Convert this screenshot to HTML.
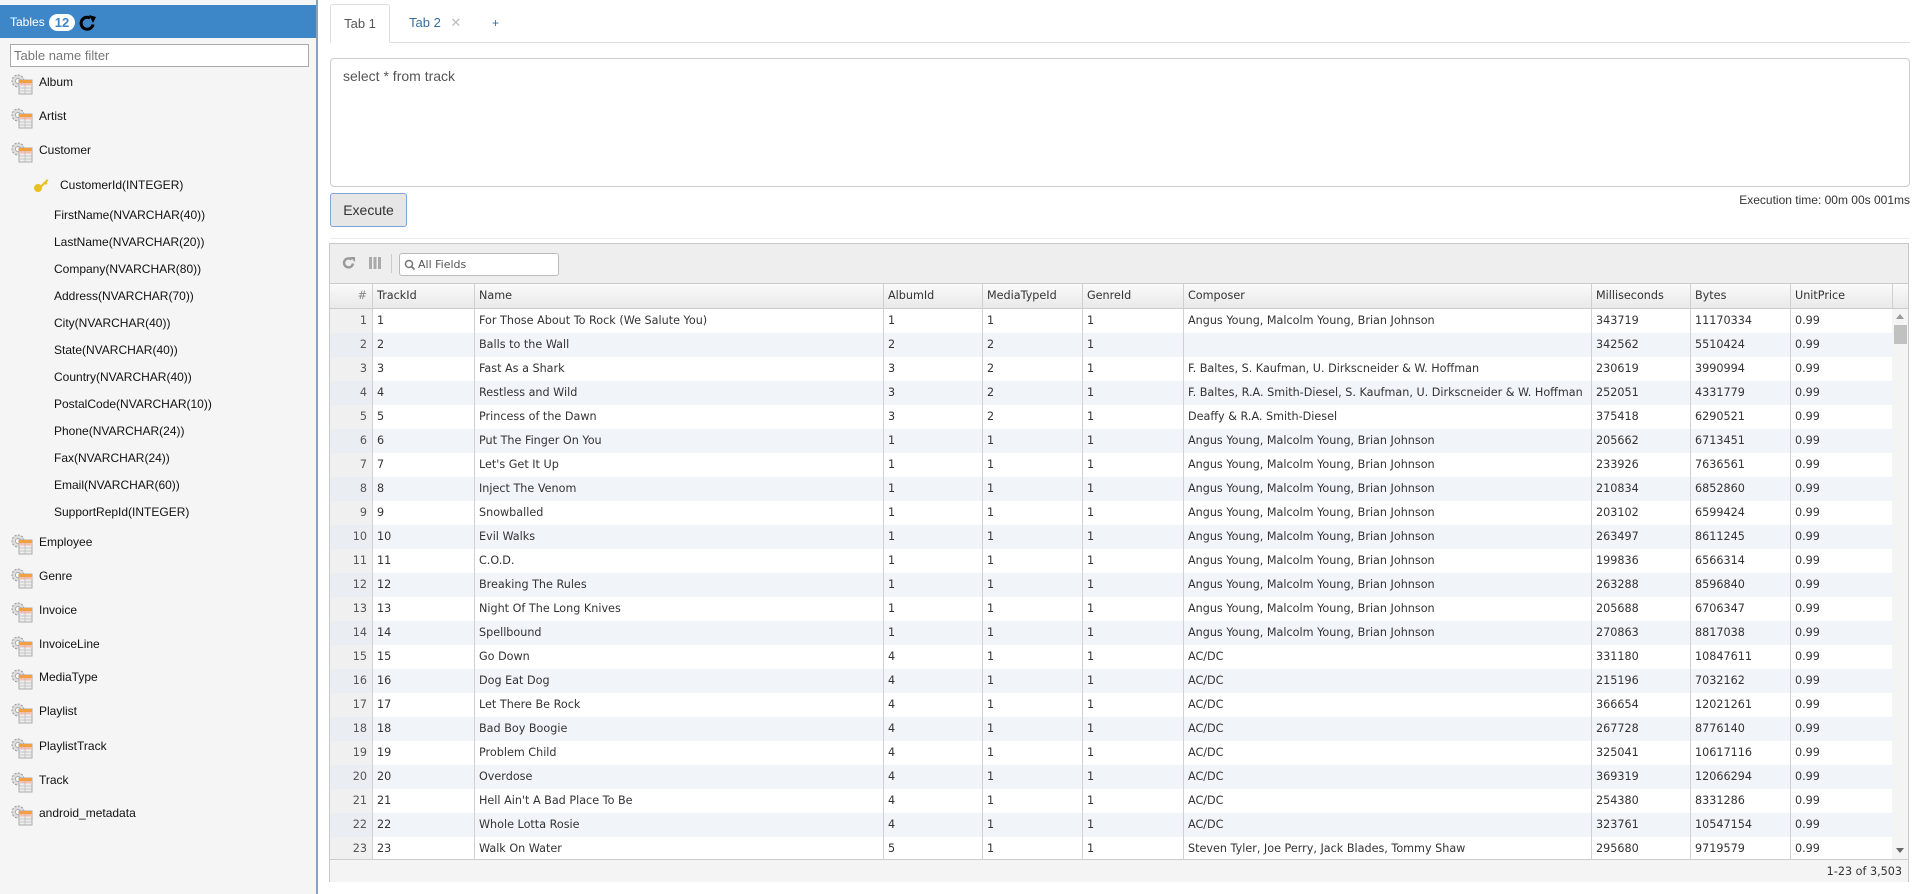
<!DOCTYPE html>
<html><head><meta charset="utf-8">
<style>
*{box-sizing:border-box;margin:0;padding:0}
body{width:1920px;height:894px;overflow:hidden;background:#fff;font-family:"Liberation Sans",Arial,sans-serif;position:relative}
#side{position:absolute;left:0;top:0;width:318px;height:894px;background:#f5f5f5;border-right:2px solid #8aa3bd}
#hdr{position:absolute;left:0;top:5px;width:316px;height:33px;background:#3d87c9;color:#fff;font-size:12px}
#hdr .t{position:absolute;left:10px;top:10px}
#hdr .b{position:absolute;left:49px;top:9px;width:26px;height:17px;border-radius:9px;background:#fff;color:#3d87c9;font-weight:bold;text-align:center;line-height:17px;font-size:13px}
#flt{position:absolute;left:10px;top:44px;width:299px;height:23px;border:1px solid #aaa;background:#fff;font-size:13px;color:#777;padding:3px 3px;line-height:15px}
.tb{position:absolute;left:10px;font-size:12px;color:#111}
.tb svg{position:absolute;left:0;top:-10px}
.tb span{position:absolute;left:29px;top:-7px;white-space:nowrap}
.col{position:absolute;left:54px;font-size:12px;color:#111;white-space:nowrap}
#tabs{position:absolute;left:330px;top:42px;width:1580px;height:1px;background:#ddd}
.tab{position:absolute;top:4px;height:39px;font-size:13px;line-height:38px}
#ta{position:absolute;left:330px;top:58px;width:1580px;height:129px;border:1px solid #ccc;border-radius:4px;font-size:14px;color:#555;padding:9px 12px}
#ex{position:absolute;left:330px;top:193px;width:77px;height:34px;border:1px solid #7ea6d8;border-radius:3px;background:#e6e6e6;font-size:14px;color:#333;text-align:center;line-height:32px}
#et{position:absolute;right:10px;top:193px;font-size:12px;color:#333}
#sep{position:absolute;left:330px;top:238px;width:1580px;height:1px;background:#eee}
#grid{position:absolute;left:329px;top:243px;width:1580px;height:639px;border:1px solid #c8c8c8;background:#f4f4f4;font-family:"DejaVu Sans",Verdana,sans-serif;font-size:11.2px;color:#333}
#gt{position:absolute;left:0;top:0;width:100%;height:39px;background:#eee}
#srch{position:absolute;left:69px;top:9px;width:160px;height:23px;border:1px solid #bbb;border-radius:3px;background:#fff;color:#555;font-size:11px;padding:4px 0 0 18px}
#gh{position:absolute;left:0;top:39px;width:100%;height:26px;background:linear-gradient(#fafafa,#e9e9e9);border-top:1px solid #ccc;border-bottom:1px solid #ccc}
.c{position:absolute;top:0;height:100%;padding-left:4px;border-left:1px solid #d0d0d0;white-space:nowrap;overflow:hidden}
#rows{position:absolute;left:0;top:65px;width:1562px;height:550px;background:#fff;overflow:hidden}
.r{position:absolute;left:0;width:1562px;height:24px;line-height:23px}
.r.e{background:#f1f5fa}
.rn{position:absolute;left:0;width:42px;height:24px;text-align:right;padding-right:5px;color:#555;background:#f0f0f0}
.r.e .rn{background:#eaeef3}
#ft{position:absolute;left:0;top:615px;width:100%;height:23px;border-top:1px solid #ccc;background:#f4f4f4}
</style></head><body>
<div id="side">
<div id="hdr"><span class="t">Tables</span><span class="b">12</span>
<svg style="position:absolute;left:77px;top:8px" width="21" height="21" viewBox="0 0 21 21"><path d="M16 11.5A6 6 0 1 1 13 5" fill="none" stroke="#000" stroke-width="3"/><path d="M12 2l7 2-3 6z" fill="#000"/></svg></div>
<div id="flt">Table name filter</div>
</div>
<div id="tabs"></div>
<div class="tab" style="left:330px;width:60px;border:1px solid #ddd;border-bottom:1px solid #fff;border-radius:3px 3px 0 0;background:#fff;color:#555;text-align:center">Tab 1</div>
<div class="tab" style="left:409px;color:#3a6e9e">Tab 2 <span style="color:#bbb;margin-left:6px">✕</span></div>
<div class="tab" style="left:492px;color:#3a6e9e;font-size:12px">+</div>
<div id="ta">select * from track</div>
<div id="ex">Execute</div>
<div id="et">Execution time: 00m 00s 001ms</div>
<div id="sep"></div>
<div id="grid">
<div id="gt">
<svg style="position:absolute;left:12px;top:12px" width="14" height="14" viewBox="0 0 14 14"><path d="M11 7.5A4.5 4.5 0 1 1 9.5 3.5" fill="none" stroke="#999" stroke-width="2.4"/><path d="M8 1h5v5z" fill="#999"/></svg>
<svg style="position:absolute;left:38px;top:12px" width="14" height="14"><rect x="1" y="1" width="3" height="12" fill="#aaa"/><rect x="5.5" y="1" width="3" height="12" fill="#aaa"/><rect x="10" y="1" width="3" height="12" fill="#aaa"/></svg>
<div style="position:absolute;left:61px;top:10px;width:1px;height:19px;background:#ccc"></div>
<div id="srch"><svg style="position:absolute;left:4px;top:5px" width="12" height="12"><circle cx="5" cy="5" r="3.5" fill="none" stroke="#777" stroke-width="1.5"/><path d="M7.5 7.5l3 3" stroke="#777" stroke-width="1.8"/></svg>All Fields</div>
</div>
<div id="gh" style="line-height:24px">
<div class="c" style="left:0;width:42px;border:0;text-align:right;padding-right:5px;color:#888">#</div>
<div class="c" style="left:42px;width:102px">TrackId</div>
<div class="c" style="left:144px;width:409px">Name</div>
<div class="c" style="left:553px;width:99px">AlbumId</div>
<div class="c" style="left:652px;width:100px">MediaTypeId</div>
<div class="c" style="left:752px;width:101px">GenreId</div>
<div class="c" style="left:853px;width:408px">Composer</div>
<div class="c" style="left:1261px;width:99px">Milliseconds</div>
<div class="c" style="left:1360px;width:100px">Bytes</div>
<div class="c" style="left:1460px;width:102px">UnitPrice</div>
<div class="c" style="left:1562px;width:18px"></div>
</div>
<div id="rows"></div>
<div style="position:absolute;left:1563px;top:65px;width:15px;height:550px;background:#f4f4f4">
<div style="position:absolute;left:3px;top:5px;width:0;height:0;border:4px solid transparent;border-bottom:5px solid #999;border-top:0"></div>
<div style="position:absolute;left:1px;top:16px;width:13px;height:19px;background:#c1c1c1"></div>
<div style="position:absolute;left:3px;bottom:6px;width:0;height:0;border:4px solid transparent;border-top:5px solid #666;border-bottom:0"></div>
</div>
<div id="ft"><span style="position:absolute;right:6px;top:5px">1-23 of 3,503</span></div>
</div>
<script>
var T=[["Album",82],["Artist",116],["Customer",150],["Employee",542],["Genre",576],["Invoice",610],["InvoiceLine",644],["MediaType",677],["Playlist",711],["PlaylistTrack",746],["Track",780],["android_metadata",813]];
var ic='<svg width="24" height="24" viewBox="0 0 24 24"><circle cx="8" cy="9" r="6" fill="#ddd" stroke="#999" stroke-dasharray="2 1.5"/><circle cx="8" cy="9" r="2.5" fill="#fff" stroke="#aaa"/><rect x="9" y="8" width="13" height="14" fill="#eee" stroke="#aaa"/><rect x="9" y="8" width="13" height="3" fill="#f4a040"/><rect x="9" y="11" width="13" height="2.5" fill="#f3c0b0"/><path d="M9 16h13M9 19h13M15 11v11" stroke="#bbb" stroke-width=".8"/></svg>';
var s=document.getElementById('side'),h='';
T.forEach(function(t){h+='<div class="tb" style="top:'+t[1]+'px">'+ic+'<span>'+t[0]+'</span></div>';});
h+='<svg style="position:absolute;left:33px;top:177px" width="16" height="16" viewBox="0 0 16 16"><circle cx="5" cy="11" r="4" fill="#e8c020"/><path d="M7 9l7-7 1.5 1.5-2 2 1 1-1.5 1.5-1-1-3.5 3.5z" fill="#e8c020"/></svg>';
h+='<div class="col" style="left:60px;top:178px">CustomerId(INTEGER)</div>';
var C=[["FirstName(NVARCHAR(40))",215],["LastName(NVARCHAR(20))",242],["Company(NVARCHAR(80))",269],["Address(NVARCHAR(70))",296],["City(NVARCHAR(40))",323],["State(NVARCHAR(40))",350],["Country(NVARCHAR(40))",377],["PostalCode(NVARCHAR(10))",404],["Phone(NVARCHAR(24))",431],["Fax(NVARCHAR(24))",458],["Email(NVARCHAR(60))",485],["SupportRepId(INTEGER)",512]];
C.forEach(function(c){h+='<div class="col" style="top:'+(c[1]-7)+'px">'+c[0]+'</div>';});
s.innerHTML+=h;
var A="Angus Young, Malcolm Young, Brian Johnson",D="AC/DC";
var R=[["For Those About To Rock (We Salute You)",1,1,A,343719,11170334],["Balls to the Wall",2,2,"",342562,5510424],["Fast As a Shark",3,2,"F. Baltes, S. Kaufman, U. Dirkscneider &amp; W. Hoffman",230619,3990994],["Restless and Wild",3,2,"F. Baltes, R.A. Smith-Diesel, S. Kaufman, U. Dirkscneider &amp; W. Hoffman",252051,4331779],["Princess of the Dawn",3,2,"Deaffy &amp; R.A. Smith-Diesel",375418,6290521],["Put The Finger On You",1,1,A,205662,6713451],["Let's Get It Up",1,1,A,233926,7636561],["Inject The Venom",1,1,A,210834,6852860],["Snowballed",1,1,A,203102,6599424],["Evil Walks",1,1,A,263497,8611245],["C.O.D.",1,1,A,199836,6566314],["Breaking The Rules",1,1,A,263288,8596840],["Night Of The Long Knives",1,1,A,205688,6706347],["Spellbound",1,1,A,270863,8817038],["Go Down",4,1,D,331180,10847611],["Dog Eat Dog",4,1,D,215196,7032162],["Let There Be Rock",4,1,D,366654,12021261],["Bad Boy Boogie",4,1,D,267728,8776140],["Problem Child",4,1,D,325041,10617116],["Overdose",4,1,D,369319,12066294],["Hell Ain't A Bad Place To Be",4,1,D,254380,8331286],["Whole Lotta Rosie",4,1,D,323761,10547154],["Walk On Water",5,1,"Steven Tyler, Joe Perry, Jack Blades, Tommy Shaw",295680,9719579]];
var L=[[42,102],[144,409],[553,99],[652,100],[752,101],[853,408],[1261,99],[1360,100],[1460,102]];
var g='';
R.forEach(function(r,i){var v=[i+1,r[0],r[1],r[2],1,r[3],r[4],r[5],"0.99"];
g+='<div class="r'+(i%2?' e':'')+'" style="top:'+(i*24)+'px"><div class="rn">'+(i+1)+'</div>';
v.forEach(function(x,j){g+='<div class="c" style="left:'+L[j][0]+'px;width:'+L[j][1]+'px">'+x+'</div>';});
g+='</div>';});
document.getElementById('rows').innerHTML=g;
</script>
</body></html>
